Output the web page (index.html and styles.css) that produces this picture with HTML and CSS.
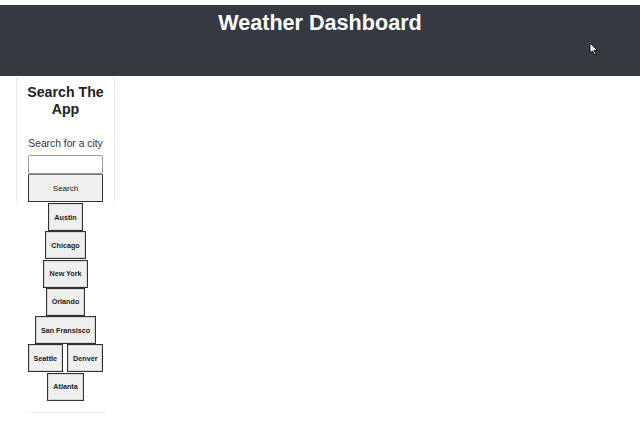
FILE: index.html
```html
<!DOCTYPE html>
<html lang="en">
<head>
    <meta charset="UTF-8">
    <meta name="viewport" content="width=device-width, initial-scale=1.0">
    <title>Weather Dashboard</title>
    <link rel="stylesheet" href="styles.css">
</head>
<body>
    <header class="header">
        <h1>Weather Dashboard</h1>
        <svg class="cursor" width="10" height="14" viewBox="0 0 10 14">
            <path d="M1 1 L1 11 L3.5 8.8 L5.5 13 L7 12.3 L5.1 8.3 L8.3 8.3 Z" fill="#fff" stroke="#111" stroke-width="1"/>
        </svg>
    </header>

    <div class="sidebar">
        <div class="search-card">
            <h2>Search The App</h2>
            <p class="label">Search for a city</p>
            <input type="text" class="city-input">
            <button class="search-btn">Search</button>
        </div>

        <div class="history">
            <div class="row"><button class="city-btn">Austin</button></div>
            <div class="row"><button class="city-btn">Chicago</button></div>
            <div class="row"><button class="city-btn">New York</button></div>
            <div class="row"><button class="city-btn">Orlando</button></div>
            <div class="row"><button class="city-btn">San Fransisco</button></div>
            <div class="row">
                <button class="city-btn">Seattle</button>
                <button class="city-btn">Denver</button>
            </div>
            <div class="row"><button class="city-btn">Atlanta</button></div>
        </div>

        <div class="divider"></div>
    </div>
</body>
</html>
```

FILE: styles.css
```css
body {
    margin: 0;
    padding-top: 5px;
    font-family: "Liberation Sans", Arial, sans-serif;
    background: #fff;
    color: #212529;
}
.header {
    position: relative;
    height: 71px;
    background: #343a40;
    text-align: center;
}
.header h1 {
    margin: 0;
    padding-top: 4px;
    font-size: 21.6px;
    line-height: 28px;
    font-weight: bold;
    color: #fff;
}
.cursor {
    position: absolute;
    left: 589px;
    top: 37px;
}
.sidebar {
    width: 99px;
    margin-left: 16px;
    margin-top: 1px;
}
.search-card {
    border: 1px solid #e6e6e6;
    border-top: none;
    border-bottom: none;
    border-radius: 0 0 3px 3px;
    padding: 7px 10px 0 10px;
    text-align: center;
}
.search-card h2 {
    margin: 0;
    font-size: 14.2px;
    line-height: 17px;
    font-weight: bold;
    color: #222;
}
.label {
    margin: 19px 0 0 0;
    font-size: 10.3px;
    line-height: 13px;
    color: #333;
}
.city-input {
    display: block;
    box-sizing: border-box;
    width: 75px;
    height: 19px;
    margin: 5px auto 0 auto;
    border: 1px solid #999;
    border-radius: 2px;
    background: #fff;
    padding: 0;
}
.search-btn {
    display: block;
    box-sizing: border-box;
    width: 75px;
    height: 28px;
    margin: 0 auto;
    border: 1.5px solid #333;
    border-top-color: #777;
    background: #efefef;
    font-family: "Liberation Sans", Arial, sans-serif;
    font-size: 8px;
    color: #111;
    padding: 0;
}
.history {
    display: flex;
    flex-direction: column;
    gap: 0.3px;
    margin-top: 1px;
}
.row {
    display: flex;
    justify-content: center;
    gap: 4px;
}
.city-btn {
    box-sizing: border-box;
    height: 28px;
    padding: 0 5px;
    border: 1px solid #333;
    background: #efefef;
    box-shadow: inset 0 0 0 1px #d6d6d6;
    font-family: "Liberation Sans", Arial, sans-serif;
    font-size: 7.2px;
    font-weight: bold;
    color: #222;
}
.divider {
    width: 80px;
    margin: 11px auto 0 auto;
    border-top: 1px solid #eee;
}
```
